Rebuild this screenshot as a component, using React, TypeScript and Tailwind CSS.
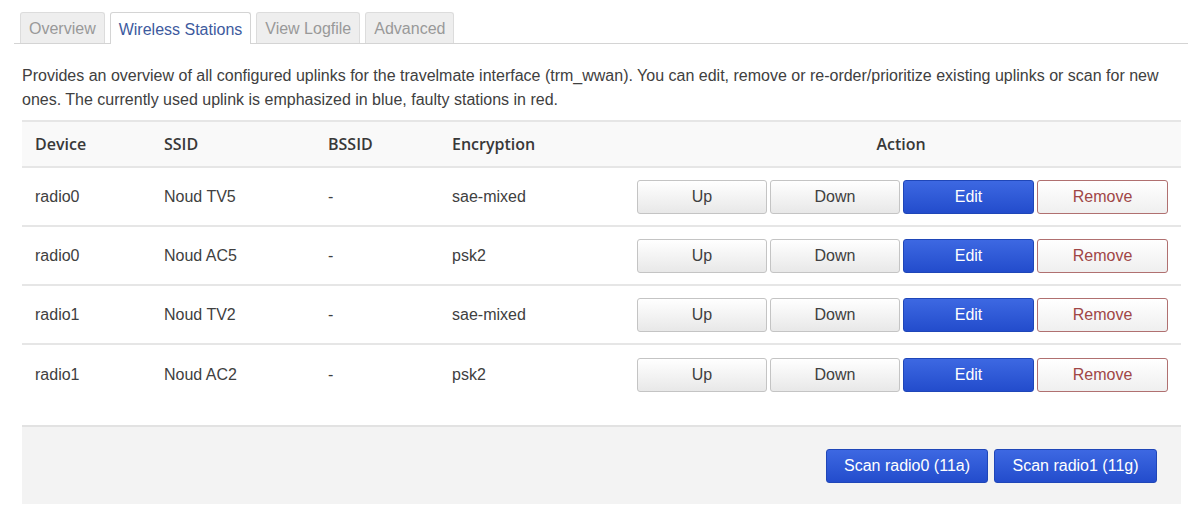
const rows = [
  { device: 'radio0', ssid: 'Noud TV5', bssid: '-', enc: 'sae-mixed' },
  { device: 'radio0', ssid: 'Noud AC5', bssid: '-', enc: 'psk2' },
  { device: 'radio1', ssid: 'Noud TV2', bssid: '-', enc: 'sae-mixed' },
  { device: 'radio1', ssid: 'Noud AC2', bssid: '-', enc: 'psk2' },
];

const tabs = ['Overview', 'Wireless Stations', 'View Logfile', 'Advanced'];

const cols = 'grid grid-cols-[129px_164px_124px_186px_1fr]';

function Tabs() {
  return (
    <div className="ml-[14px] mr-[12px] mt-[12px] flex items-end gap-[5px] border-b border-[#d4d4d4] pl-[6px]">
      {tabs.map((t, i) =>
        i === 1 ? (
          <div
            key={t}
            className="-mb-px flex h-[32px] items-center rounded-t-[3px] border border-b-0 border-[#d4d4d4] bg-white px-[8px] pt-[2px] text-[#3d5a9e]"
          >
            {t}
          </div>
        ) : (
          <div
            key={t}
            className="flex h-[31px] items-center rounded-t-[3px] border border-b-0 border-[#dcdcdc] bg-[#eeeeee] px-[8px] pt-[2px] text-[#999999]"
          >
            {t}
          </div>
        ),
      )}
    </div>
  );
}

export default function App() {
  return (
    <div
      className="h-[519px] w-[1200px] overflow-hidden bg-white text-[16px] text-[#404040]"
      style={{ fontFamily: '"Liberation Sans", Arial, sans-serif' }}
    >
      <Tabs />
      <p className="mx-[22px] mt-[20px] text-[16px] leading-[24px] text-[#404040]">
        Provides an overview of all configured uplinks for the travelmate interface (trm_wwan). You can edit, remove or
        re-order/prioritize existing uplinks or scan for new ones. The currently used uplink is emphasized in blue, faulty
        stations in red.
      </p>

      <div className="mx-[22px] mt-[8px] w-[1159px]">
        <div
          className={`${cols} h-[48px] items-center border-y-2 border-[#e6e6e6] bg-[#f9f9f9] text-[16px] font-semibold text-[#383838]`}
          style={{ fontFamily: '"Open Sans", sans-serif' }}
        >
          <div className="pl-[13px]">Device</div>
          <div className="pl-[13px]">SSID</div>
          <div className="pl-[13px]">BSSID</div>
          <div className="pl-[13px]">Encryption</div>
          <div className="pr-[4px] text-center">Action</div>
        </div>
        {rows.map((r, i) => (
          <div
            key={i}
            className={`${cols} h-[59px] items-center ${i < rows.length - 1 ? 'border-b-2 border-[#e6e6e6]' : ''}`}
          >
            <div className="pl-[13px]">{r.device}</div>
            <div className="pl-[13px]">{r.ssid}</div>
            <div className="pl-[13px]">{r.bssid}</div>
            <div className="pl-[13px]">{r.enc}</div>
            <div className="flex gap-[3px] pl-[12px]">
              <button className="h-[34px] w-[130px] rounded-[3px] border border-[#c4c4c4] bg-gradient-to-b from-white to-[#e8e8e8] text-[#404040]">
                Up
              </button>
              <button className="h-[34px] w-[130px] rounded-[3px] border border-[#c4c4c4] bg-gradient-to-b from-white to-[#e8e8e8] text-[#404040]">
                Down
              </button>
              <button className="h-[34px] w-[131px] rounded-[3px] border border-[#1f46b8] bg-gradient-to-b from-[#3d68e2] to-[#234ccc] text-white">
                Edit
              </button>
              <button className="h-[34px] w-[131px] rounded-[3px] border border-[#b07070] bg-gradient-to-b from-white to-[#efefef] text-[#a04646]">
                Remove
              </button>
            </div>
          </div>
        ))}
      </div>

      <div className="mx-[22px] mt-[21px] flex h-[79px] w-[1159px] items-center justify-end gap-[6px] border-t-2 border-[#e2e2e2] bg-[#f3f3f3] pr-[24px]">
        <button className="h-[34px] w-[162px] rounded-[3px] border border-[#1f46b8] bg-gradient-to-b from-[#3d68e2] to-[#234ccc] text-white">
          Scan radio0 (11a)
        </button>
        <button className="h-[34px] w-[163px] rounded-[3px] border border-[#1f46b8] bg-gradient-to-b from-[#3d68e2] to-[#234ccc] text-white">
          Scan radio1 (11g)
        </button>
      </div>
    </div>
  );
}
